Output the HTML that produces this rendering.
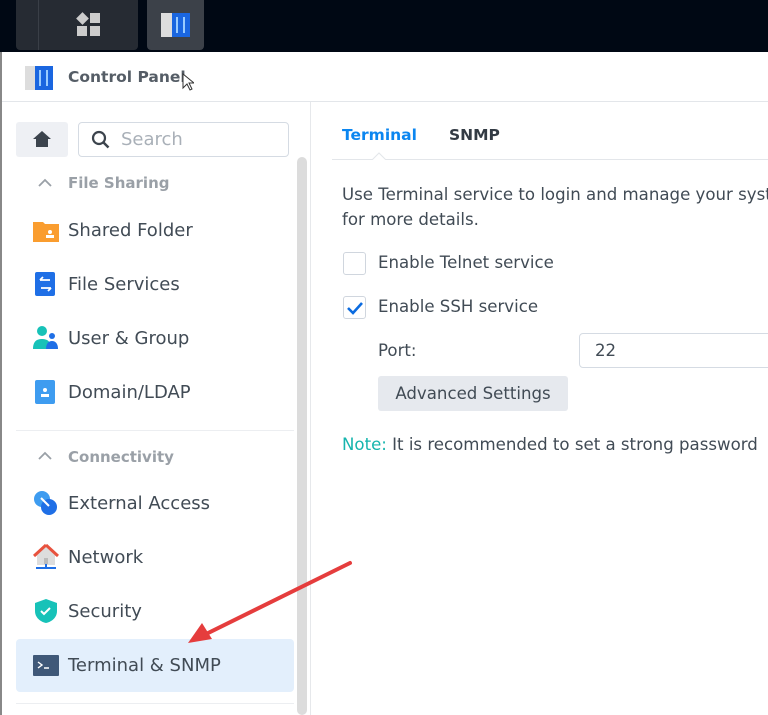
<!DOCTYPE html>
<html><head><style>
*{margin:0;padding:0;box-sizing:border-box}
body{width:768px;height:715px;overflow:hidden;background:#000814;font-family:"DejaVu Sans","Liberation Sans",sans-serif;position:relative;color:#414b55}
.a{position:absolute}
.item{position:absolute;left:68px;font-size:18px;color:#414b55;line-height:20px;white-space:nowrap}
.ic{position:absolute;left:33px;width:26px;height:26px}
.sec{position:absolute;left:68px;font-size:15px;font-weight:bold;color:#9aa0a7}
.t{font-size:16.6px}
</style></head><body>
<div class="a" style="left:16px;top:0;width:122px;height:50px;background:#262b33;border-radius:0 0 4px 4px"></div>
<div class="a" style="left:38px;top:0;width:1px;height:50px;background:#3a3f47"></div>
<div class="a" style="left:147px;top:0;width:57px;height:50px;background:#3c4149;border-radius:0 0 4px 4px"></div>
<svg class="a" style="left:76px;top:12px" width="26" height="26"><rect x="2" y="2" width="9" height="9" fill="#ccc" transform="rotate(45 6.5 6.5)"/><rect x="14" y="1" width="10" height="10" fill="#ccc"/><rect x="1" y="14" width="10" height="10" fill="#ccc"/><rect x="14" y="14" width="10" height="10" fill="#ccc"/></svg>
<svg class="a" style="left:161px;top:12px" width="30" height="26"><rect x="0" y="1" width="12" height="24" fill="#ddd"/><rect x="11" y="1" width="18" height="24" fill="#1a66e0"/><path d="M16 5v16M23 5v16" stroke="#9cf" stroke-width="2"/></svg>
<div class="a" style="left:0;top:52px;width:768px;height:663px;background:#fff;border-left:2px solid #888"></div>
<svg class="a" style="left:25px;top:64px" width="28" height="28"><rect x="0" y="2" width="12" height="24" fill="#ddd"/><rect x="10" y="2" width="18" height="24" fill="#1a66e0"/><path d="M15 6v16M22 6v16" stroke="#9cf" stroke-width="2"/></svg>
<div class="a" style="left:68px;top:68px;font-size:15.5px;font-weight:bold;color:#555d66">Control Panel</div>
<svg class="a" style="left:182px;top:73px" width="12" height="18"><path d="M1 1v14l4-4 3 6 2-1-3-6h5z" fill="#fff" stroke="#333"/></svg>
<div class="a" style="left:2px;top:101px;width:766px;height:1px;background:#e3e6ea"></div>
<div class="a" style="left:310px;top:102px;width:1px;height:613px;background:#e6e8eb"></div>
<div class="a" style="left:297px;top:157px;width:10px;height:558px;background:#dcdcdc;border-radius:5px"></div>
<div class="a" style="left:16px;top:122px;width:52px;height:35px;background:#eef0f4;border-radius:3px"></div>
<svg class="a" style="left:32px;top:130px" width="20" height="18"><path d="M10 1L1 9h3v8h12V9h3z" fill="#3c444d"/></svg>
<div class="a" style="left:78px;top:122px;width:211px;height:35px;border:1px solid #d5dbe3;border-radius:4px"></div>
<svg class="a" style="left:91px;top:130px" width="20" height="20"><circle cx="8" cy="8" r="6" fill="none" stroke="#3c444d" stroke-width="2.2"/><path d="M12.5 12.5l5 5" stroke="#3c444d" stroke-width="2.5"/></svg>
<div class="a" style="left:121px;top:129px;font-size:18px;color:#a9b0b8">Search</div>
<svg class="a" style="left:38px;top:178px" width="14" height="10"><path d="M1 8l6-6 6 6" fill="none" stroke="#9aa0a7" stroke-width="1.8"/></svg>
<div class="sec" style="top:174px">File Sharing</div>
<svg class="ic" style="top:218px" viewBox="0 0 26 26"><path d="M0 4h10l2 2h14v18H0z" fill="#fa9d2f"/><circle cx="17" cy="14" r="2" fill="#fff"/><rect x="13" y="17" width="8" height="3" fill="#fff"/></svg>
<div class="item" style="top:221px">Shared Folder</div>
<svg class="ic" style="top:271px" viewBox="0 0 26 26"><rect x="2" y="1" width="20" height="24" rx="2" fill="#1f6fe6"/><path d="M7 9h10M7 9l3-3M18 17H8M18 17l-3 3" stroke="#fff" stroke-width="1.8" fill="none"/></svg>
<div class="item" style="top:275px">File Services</div>
<svg class="ic" style="top:325px" viewBox="0 0 26 26"><circle cx="9" cy="6" r="5" fill="#17c2b8"/><path d="M0 24c0-8 4-10 9-10s9 2 9 10z" fill="#17c2b8"/><circle cx="19" cy="11" r="3" fill="#1f6fe6"/><path d="M13 24c0-6 3-8 6-8s6 2 6 8z" fill="#1f6fe6"/></svg>
<div class="item" style="top:329px">User &amp; Group</div>
<svg class="ic" style="top:379px" viewBox="0 0 26 26"><rect x="2" y="1" width="20" height="24" rx="2" fill="#3e9cf0"/><circle cx="12" cy="11" r="2" fill="#fff"/><rect x="8" y="15" width="8" height="3" fill="#fff"/></svg>
<div class="item" style="top:383px">Domain/LDAP</div>
<div class="a" style="left:16px;top:430px;width:278px;height:1px;background:#eceef1"></div>
<svg class="a" style="left:38px;top:451px" width="14" height="10"><path d="M1 8l6-6 6 6" fill="none" stroke="#9aa0a7" stroke-width="1.8"/></svg>
<div class="sec" style="top:448px">Connectivity</div>
<svg class="ic" style="top:490px" viewBox="0 0 26 26"><circle cx="9" cy="9" r="8" fill="#3e9cf0"/><circle cx="16" cy="17" r="8" fill="#1f6fe6"/><path d="M8 8l8 8" stroke="#fff" stroke-width="2"/></svg>
<div class="item" style="top:494px">External Access</div>
<svg class="ic" style="top:544px" viewBox="0 0 26 26"><path d="M13 1L1 12h3v9h18v-9h3z" fill="#ddd"/><path d="M13 1L1 12M13 1l12 11" stroke="#e8523e" stroke-width="3" fill="none"/><rect x="11" y="14" width="4" height="6" fill="#bbb"/><path d="M3 24h20M13 20v4" stroke="#1f6fe6" stroke-width="2"/></svg>
<div class="item" style="top:548px">Network</div>
<svg class="ic" style="top:598px" viewBox="0 0 26 26"><path d="M13 1l11 4v8c0 7-6 11-11 12C8 24 2 20 2 13V5z" fill="#17c2b8"/><path d="M8 13l3 3 6-6" stroke="#fff" stroke-width="2" fill="none"/></svg>
<div class="item" style="top:602px">Security</div>
<div class="a" style="left:16px;top:639px;width:278px;height:53px;background:#e3effc;border-radius:4px"></div>
<svg class="ic" style="top:653px" viewBox="0 0 26 26"><rect x="0" y="2" width="26" height="21" rx="1" fill="#3f5878"/><path d="M5 9l4 3-4 3M11 15h5" stroke="#fff" stroke-width="1.4" fill="none"/></svg>
<div class="item" style="top:656px">Terminal &amp; SNMP</div>
<div class="a" style="left:16px;top:703px;width:278px;height:1px;background:#eceef1"></div>
<div class="a" style="left:342px;top:126px;font-size:15.5px;font-weight:bold;color:#0b86f0">Terminal</div>
<div class="a" style="left:449px;top:126px;font-size:15.5px;font-weight:bold;color:#333b44">SNMP</div>
<div class="a" style="left:332px;top:159px;width:436px;height:1px;background:#e3e6ea"></div>
<svg class="a" style="left:372px;top:152px" width="14" height="8"><path d="M0 8l7-7 7 7" fill="#fff" stroke="#e3e6ea"/></svg>
<div class="a t" style="left:342px;top:182px;line-height:25px;color:#414b55;white-space:nowrap">Use Terminal service to login and manage your system<br>for more details.</div>
<div class="a" style="left:343px;top:252px;width:23px;height:23px;border:1px solid #d0d6de;border-radius:3px"></div>
<div class="a t" style="left:378px;top:253px">Enable Telnet service</div>
<div class="a" style="left:343px;top:296px;width:23px;height:23px;border:1px solid #d0d6de;border-radius:3px"></div>
<svg class="a" style="left:345px;top:299px" width="20" height="18"><path d="M3 9l5 5 9-10" stroke="#0b6be0" stroke-width="2.6" fill="none"/></svg>
<div class="a t" style="left:378px;top:297px">Enable SSH service</div>
<div class="a t" style="left:378px;top:341px">Port:</div>
<div class="a" style="left:579px;top:333px;width:200px;height:35px;border:1px solid #d5dbe3;border-radius:4px"></div>
<div class="a t" style="left:595px;top:341px">22</div>
<div class="a t" style="left:378px;top:376px;width:190px;height:35px;background:#e6e9ee;border-radius:3px;text-align:center;line-height:35px">Advanced Settings</div>
<div class="a t" style="left:342px;top:435px;white-space:nowrap"><span style="color:#16b5ae">Note:</span> It is recommended to set a strong password</div>
<svg class="a" style="left:180px;top:555px" width="180" height="100"><path d="M170 8L20 82" stroke="#e53d3d" stroke-width="4" stroke-linecap="round"/><path d="M8 88l14-20 10 16z" fill="#e53d3d"/></svg>
</body></html>
